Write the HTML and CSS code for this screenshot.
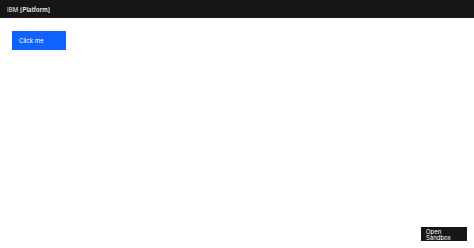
FILE: index.html
```html
<!DOCTYPE html>
<html lang="en">
<head>
    <meta charset="UTF-8">
    <meta name="viewport" content="width=device-width, initial-scale=1.0">
    <title>IBM Platform</title>
    <link rel="stylesheet" href="styles.css">
</head>
<body>
    <header class="shell-header">
        <a class="header-name" href="#">IBM <b>[Platform]</b></a>
    </header>
    <main class="content">
        <button class="btn-primary">Click me</button>
    </main>
    <button class="sandbox-btn">Open<br>Sandbox</button>
</body>
</html>
```
FILE: styles.css
```css
html, body {
    margin: 0;
    padding: 0;
    height: 100%;
}
body {
    font-family: "Inter", "Noto Sans", sans-serif;
    background: #ffffff;
    color: #161616;
    position: relative;
}
.shell-header {
    height: 18px;
    background: #161616;
    display: flex;
    align-items: center;
    padding-left: 7px;
}
.header-name,
.header-name:visited {
    color: #f4f4f4;
    font-size: 6px;
    text-decoration: none;
    letter-spacing: 0.1px;
}
.header-name b {
    font-weight: 600;
    color: #f4f4f4;
}
.content {
    padding: 13px 12px;
}
.btn-primary {
    display: block;
    width: 54px;
    height: 19px;
    background: #0f62fe;
    color: #ffffff;
    border: none;
    font-family: inherit;
    font-size: 6px;
    text-align: left;
    padding: 0 0 0 7px;
    cursor: pointer;
}
.sandbox-btn {
    position: absolute;
    right: 7px;
    bottom: 7px;
    width: 46px;
    height: 14px;
    background: #161616;
    color: #ffffff;
    border: none;
    font-family: inherit;
    font-size: 6px;
    line-height: 5.5px;
    text-align: left;
    padding: 1px 0 0 5px;
}
```
